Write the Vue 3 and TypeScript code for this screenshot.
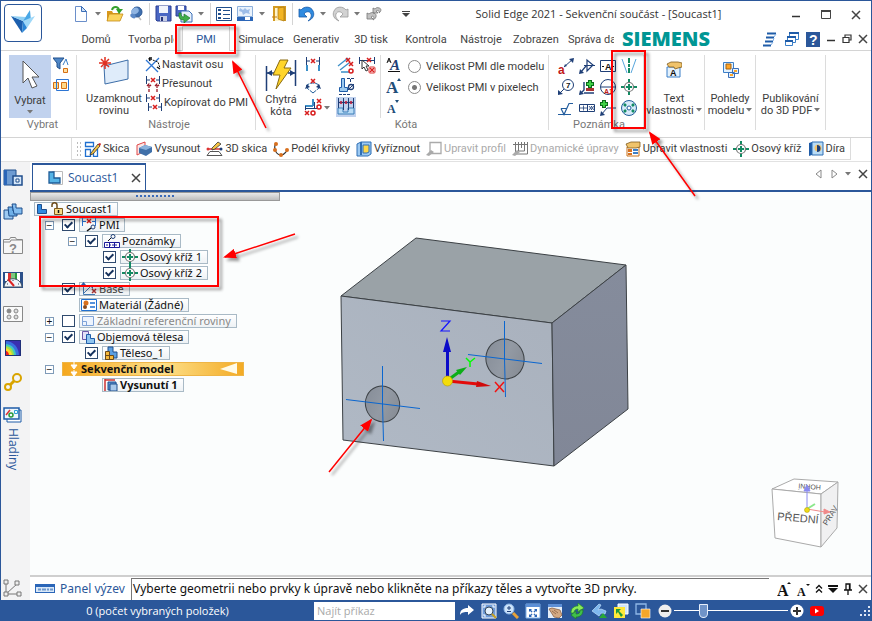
<script setup lang="ts">
import { defineComponent, h, ref } from 'vue'

type Glyph = [number, number, string]

const n = '#1f3f77'
const r = '#d81e1e'
const pencil = '<path d="M7 12l7-9 2 2-7 8-3 1z" fill="#f4c343" stroke="#333" stroke-width=".8"/><path d="M14 3l2 2 1-2-1-1z" fill="#c22"/>'
const axisCross = '<path d="M8 0v16M0 8h16" stroke="#138a62" stroke-width="2" stroke-dasharray="4 1 6 1 4"/><circle cx="8" cy="8" r="4.500" fill="#fff" stroke="#777" stroke-width="1.200"/><path d="M8 5v6M5 8h6" stroke="#138a62" stroke-width="2"/>'
const plus = (x: number, y: number) => `<path d="M${x} ${y - 4}v8M${x - 4} ${y}h8" stroke="#0a6b1c" stroke-width="4"/><path d="M${x} ${y - 3}v6M${x - 3} ${y}h6" stroke="#3fd046" stroke-width="2"/>`
const cross = (x: number, y: number, c = r) => `<path d="M${x - 2} ${y - 2}l4 4M${x + 2} ${y - 2}l-4 4" stroke="${c}" stroke-width="1.500"/>`
const dim = (y: number, x = 0) => `<path d="M${x + 1.5} ${y - 4}v8M${x + 14.5} ${y - 4}v8M${x + 1} ${y}h4M${x + 11} ${y}h4" stroke="${n}"/>${cross(x + 8, y)}`
const txt = (x: number, y: number, s: number, t: string, c = '#111', f = 'Liberation Sans') => `<text x="${x}" y="${y}" font-size="${s}" font-weight="bold" font-family="${f}" fill="${c}">${t}</text>`

const glyphs: Record<string, Glyph> = {
  logo: [26, 26, '<path d="M1 6l12 5-1 12z" fill="#1c5fae"/><path d="M1 6l12 5 3-4z" fill="#8fd0f5"/><path d="M13 11l7-11 1 11z" fill="#49a7e6"/><path d="M13 11l12-5-8 12z" fill="#9fd8f8"/><path d="M13 11l4 7-5 5z" fill="#2b86d6"/>'],
  fresh: [16, 18, '<path d="M2.500 1.500h6l5 5v10h-11z" fill="#fdfeff" stroke="#6b8fca"/><path d="M8.500 1.500v5h5z" fill="#cfe0f6" stroke="#3b6fb8"/>'],
  open: [18, 18, '<path d="M1 6h5l1 2h7v8H1z" fill="#d9981b"/><path d="M3 9h14l-3 7H1z" fill="#fbd45c" stroke="#c58a17" stroke-width=".8"/><path d="M6 5c1-4 6-4 7 0" fill="none" stroke="#33a02c" stroke-width="2"/><path d="M10 4h7l-4 5z" fill="#33a02c"/>'],
  pin: [16, 16, '<path d="M9 9l4 5" stroke="#bbb" stroke-width="1.500"/><ellipse cx="9" cy="6" rx="5" ry="5" fill="#3f6fae" stroke="#2b5796"/><ellipse cx="7" cy="5" rx="4" ry="3" fill="#8fb4e2" transform="rotate(-35 7 5)"/><ellipse cx="5" cy="10" rx="3" ry="2" fill="#5c89c7" transform="rotate(30 5 10)"/>'],
  save: [17, 17, '<path d="M1 1h15v15H2l-1-1z" fill="#4a67c3" stroke="#2b3f93"/><path d="M4 1h9v7H4z" fill="#f1f4fb"/><path d="M5 11h7v5H5z" fill="#c5cbe4"/><path d="M6 12h2v4H6z" fill="#26357a"/>'],
  saveas: [18, 18, '<path d="M1 1h10v10H1z" fill="#4a67c3" stroke="#2b3f93"/><path d="M3 1h6v4H3z" fill="#fff"/><path d="M6 6h8l3 3v8H6z" fill="#e6f0fb" stroke="#3b6fb8"/><path d="M4 8v3c0 3 2 4 5 4v3l6-5-6-4v3c-2 0-3-1-3-4z" fill="#3fae49" stroke="#1f7a2b" stroke-width=".7"/>'],
  list: [16, 16, '<path d="M.5 1.500h15v13H.5z" fill="#fff" stroke="#1f4e8c"/><path d="M2 3h3v2H2zM2 7h3v2H2zM2 11h3v2H2z" fill="#1f4e8c"/><path d="M7 4.500h7M7 8.500h7M7 12.500h7" stroke="#1f4e8c"/>'],
  monitor: [16, 16, '<path d="M.5.5h15v10H.5z" fill="#e9f2fc" stroke="#8db0db"/><path d="M3 2l3 2 2-2 2 2 3-1-1 3 1 2-4-1-3 2-1-3-3-1z" fill="#9dbde8"/><path d="M0 11h16v4H0z" fill="#2b66b8"/><path d="M8 11h5v3H8z" fill="#fff"/>'],
  door: [16, 16, '<path d="M3 15V1h11v14" fill="#fff3c9" stroke="#d39a21" stroke-width="2"/><path d="M7 2l6-1v14l-6-2z" fill="#f3b524" stroke="#a87512" stroke-width=".7"/><path d="M1 11h5" stroke="#c47f13"/>'],
  undo: [17, 16, '<path d="M1 3v8h8l-3-3c2-3 6-3 7 0 1 3-1 5-3 7 5-2 7-6 5-10-2-5-9-5-12-1z" fill="#2f8be0" stroke="#1a5ba8" stroke-width=".8"/>'],
  redo: [17, 16, '<path d="M16 3v8H8l3-3C9 5 5 5 4 8c-1 3 1 5 3 7C2 13 0 9 2 5c2-5 9-5 12-1z" fill="#d2d2d2" stroke="#999" stroke-width=".8"/>'],
  link: [16, 16, '<path d="M7 2v5h5L10 5c2-1 4 0 3 2 3-2 2-5 0-5-2-1-3 0-4 1zM1 7v6h6l-2-2c2-2 4 0 2 3 4-2 4-6 1-7-2-1-4 0-5 1z" fill="#c2c2c2" stroke="#777" stroke-width=".8"/>'],
  caret: [6, 4, '<path d="M0 0h6L3 3.500z" fill="#777"/>'],
  more: [10, 8, '<path d="M1 1.500h8" stroke="#444"/><path d="M1 3h8L5 7z" fill="#444"/>'],
  cascA: [16, 16, '<path d="M5 2.500h9M4 6.500h8M3 10.500h8M1 14.500h8" stroke="#1f5ca8" stroke-width="2"/><path d="M14 3l-2 3M12 7l-1 3M11 11l-2 3" stroke="#7fb0e8"/>'],
  cascB: [16, 16, '<path d="M5.500 1.500h9v7h-9z" fill="#fff" stroke="#3b7fc8"/><path d="M5 1h10v2H5z" fill="#1f5ca8"/><path d="M3.500 5.500h8v6h-8z" fill="#fff" stroke="#3b7fc8"/><path d="M3 5h9v2H3z" fill="#1f5ca8"/><path d="M1.500 9.500h7v5h-7z" fill="#fff" stroke="#3b7fc8"/><path d="M1 9h8v2H1z" fill="#1f5ca8"/>'],
  help: [14, 16, '<path d="M0 1h14v15H0z" fill="#2b579a"/>' + txt(3, 14, 14, '?', '#fff')],
  min: [10, 10, '<path d="M1 6.500h8" stroke="#333" stroke-width="1.500"/>'],
  restore: [10, 10, '<path d="M3 3V1h6v5H7M1 3.500h6v5H1z" fill="none" stroke="#333" stroke-width="1.200"/>'],
  close: [10, 10, '<path d="M1 1l8 8M9 1l-8 8" stroke="#444" stroke-width="1.500"/>'],
  square: [12, 12, '<path d="M1.500 1.500h9v8h-9z" fill="none" stroke="#444"/><path d="M1 2h10" stroke="#444" stroke-width="2"/>'],
  cursor: [22, 32, '<path d="M4 1v22l5-5 4 10 5-2-5-9h7z" fill="#fff" stroke="#555"/>'],
  filter: [16, 16, '<path d="M0 1h11L7 6v6l-3-2V6z" fill="#4e86c6" stroke="#1f4e8c"/><path d="M10 8l3-6 2 6" fill="none" stroke="#3b7fc8"/><path d="M10.500 11.500h4v4h-4z" fill="#ffe0a0" stroke="#d66f13"/>'],
  boxsel: [16, 16, '<path d="M.5 5.500h5v6h-5zM8.500 5.500h5v6h-5z" fill="#ffd98a" stroke="#d66f13"/><path d="M3.500 2.500h12v11h-12z" fill="none" stroke="#2d75d3"/>'],
  plane: [34, 32, '<path d="M7 10l24-6v19L8 28z" fill="#dfecfa" stroke="#3d6ea8"/><path d="M8 1v12M2 7h12M4 3l8 8M12 3l-8 8" stroke="#e13021" stroke-width="1.500"/>'],
  axisset: [16, 16, '<path d="M1 3l12 12M1 14L14 1" stroke="#2d75d3" stroke-width="1.300"/><path d="M5 2l8 3 2 6" fill="none" stroke="#111" stroke-dasharray="2 1"/><path d="M4 1h3M4 1l1 3M15 12l-3-2" stroke="#111" stroke-width="1.500"/>'],
  move: [16, 16, dim(4) + '<path d="M4 16V8M12 16V8M2 10l2-2 2 2M10 10l2-2 2 2" fill="none" stroke="#9c1c2a" stroke-width="1.300" stroke-dasharray="3 1"/>'],
  copy: [18, 18, dim(4) + dim(13, 2)],
  smart: [32, 34, `<path d="M1.500 8v25M30.500 2v26M1 15h8M23 15h8" stroke="${n}" stroke-width="1.500"/><path d="M2 15l5-3v6zM30 15l-5-3v6z" fill="${n}"/><path d="M15 2h8l-4 8h7L11 31l4-14H8z" fill="#ffd52b" stroke="#8a6a10"/>`],
  dimA: [18, 16, dim(4, 1) + `<path d="M3 8v6M15 8v6" stroke="#3b8fc8" stroke-width="2"/>`],
  dimB: [18, 16, '<path d="M2 8c4-4 10-4 14 0M9 15L3 10M9 15l6-5" fill="none" stroke="#1f5c98" stroke-dasharray="4 1"/><path d="M3 6l-2 5 5-2zM15 6l2 5-5-2z" fill="#1f3f77"/>' + cross(9, 3)],
  dimC: [18, 18, `<path d="M9 1v7M1 8h8" stroke="#3b8fc8" stroke-width="2"/><path d="M2 10.500h12M10.500 4v7M1.500 8v4" stroke="${n}"/>` + cross(15, 3) + cross(3, 15) + `<circle cx="15" cy="9" r="2" fill="none" stroke="${r}" stroke-width="1.500"/><circle cx="9" cy="15" r="2" fill="none" stroke="${r}" stroke-width="1.500"/>`],
  dimD: [18, 17, `<path d="M1 9L11 1M3 13l9-7M4 15h8" stroke="#3b8fc8" stroke-width="1.300"/>` + cross(11, 3) + cross(14, 7) + `<circle cx="14" cy="14" r="2" fill="none" stroke="${r}" stroke-width="1.500"/>`],
  dimE: [18, 18, `<path d="M4.500 1.500h3v9h3v4h-8v-4h2z" fill="#9cc9ee" stroke="#1f5ca8"/><path d="M2 17.500h12M10 1.500h7M13.500 2v4" stroke="${n}" stroke-dasharray="3 1"/><circle cx="14" cy="10" r="2.500" fill="none" stroke="${n}" stroke-width="1.300"/><path d="M11 13l6-6" stroke="${n}"/>`],
  dimF: [20, 20, `<path d="M2 11h5v4h5v-4h6v6H2z" fill="#b9dcf6" stroke="#3b7fb8"/><path d="M2.500 1v10M7.500 1v12M12.500 1v12M17.500 1v10M2 5.500h16" stroke="${n}"/><path d="M4 4l2 3M6 4L4 7M9 4l2 3M11 4L9 7M14 4l2 3M16 4l-2 3" stroke="#c02040"/>`],
  dimG: [18, 17, `<path d="M1.500 0v7M16.500 0v7M1 3.500h16" stroke="${n}"/>` + cross(11, 3) + '<path d="M4 3v9l2-2 2 4 2-1-2-4h3z" fill="#fff" stroke="#333"/><rect x="11" y="10" width="6" height="6" rx="1" fill="#fff" stroke="#d33"/>' + cross(14, 13)],
  fontA: [16, 16, '<path d="M1 6l2-5 2 5M2 4h2" stroke="#111"/><text x="4" y="13" font-size="15" font-style="italic" font-weight="bold" font-family="Liberation Serif" fill="#1f3f77">A</text><path d="M2 14.500h12" stroke="#111"/>'],
  fontUp: [16, 16, txt(0, 15, 17, 'A', '#1f4e79', 'Liberation Serif') + '<path d="M11 3h4l-2-3z" fill="#1f4e79"/>'],
  fontDn: [16, 16, txt(1, 14, 12, 'A', '#1f4e79', 'Liberation Serif') + '<path d="M9 1h4l-2 3z" fill="#1f4e79"/>'],
  noteA: [16, 16, `<path d="M6 9l9-8" stroke="${n}"/><path d="M16 0l-5 1 4 4z" fill="${n}"/><path d="M6 9l1-3 2 2z" fill="${n}"/>` + txt(0, 16, 12, 'a', '#c01818')],
  noteB: [16, 16, `<circle cx="10" cy="6" r="5.500" fill="#fff" stroke="${n}"/><path d="M6 10l-5 5" stroke="${n}"/><path d="M0 16v-5l5 4z" fill="${n}"/>` + txt(8, 9, 8, '7')],
  noteC: [16, 16, `<path d="M0 14.500h13M3 8.500l3 6 5-11h4M3 8.500h6" fill="none" stroke="#235d9e" stroke-width="1.200"/>`],
  noteD: [16, 16, `<path d="M8 2v11l6-6zM2 14l5-6M5 7.500h11" fill="none" stroke="${n}" stroke-width="1.200"/><path d="M0 16l1-5 4 4z" fill="${n}"/>`],
  noteE: [16, 16, `<path d="M1 15l4-4V3M5 14h10" fill="none" stroke="${n}" stroke-width="1.400"/><path d="M0 16l1-5 4 4z" fill="${n}"/><path d="M7 9h8v3H7z" fill="#a33"/>` + plus(11, 5)],
  noteF: [16, 10, `<path d="M.5 1.500h15v7H.5zM8.500 2v6" fill="#fff" stroke="${n}"/><path d="M1 5h7M4.500 2.500v5M10 3l3 4M13 3l-3 4M12 3l3 4M15 3l-3 4" stroke="${n}" stroke-width=".8"/>`],
  noteG: [16, 14, `<path d="M.5 1.500h15v11H.5z" fill="#fff" stroke="${n}"/>` + txt(5, 11, 9, 'A') + '<path d="M2 7.500h2M12 7.500h2" stroke="#111"/>'],
  noteH: [16, 16, `<circle cx="8" cy="8" r="7.500" fill="#fff" stroke="${n}"/><path d="M1 8h14" stroke="${n}"/>` + txt(4, 15, 7, 'A1', '#c01818')],
  noteI: [16, 16, `<path d="M1 15l6-7h9" fill="none" stroke="${n}"/><path d="M0 16l1-5 4 4z" fill="${n}"/>` + plus(4, 4)],
  centerLine: [16, 16, '<path d="M1 1l5 14M15 1l-5 14" stroke="#58a6dc"/><path d="M8 0v16" stroke="#138a62" stroke-width="2" stroke-dasharray="5 1 3 1 5"/>'],
  axisCross: [16, 16, axisCross],
  boltCircle: [16, 16, '<circle cx="8" cy="8" r="7.500" fill="#d7eafa" stroke="#1f5c98"/><circle cx="8" cy="8" r="2" fill="#fff" stroke="#1f5c98"/><path d="M3 4l2 2M13 4l-2 2M3 12l2-2M13 12l-2-2" stroke="#138a62" stroke-width="2.500"/>'],
  textProps: [16, 17, '<path d="M1 6h13v10H1z" fill="#e3f1fd" stroke="#3b7fc8"/><path d="M1 3l4-2h7l4 1v4l-4 1-3 1-1-2H3z" fill="#f0c36b" stroke="#805a1c" stroke-width=".8"/>' + txt(4, 15, 9, 'A')],
  views: [17, 17, '<path d="M1.500 1.500h10v10h-10z" fill="#e3f1fd" stroke="#3b7fc8"/><path d="M4 3h5v5H4z" fill="#ffa526" stroke="#a36213"/><path d="M10.500 7.500h6v5h-6zM6.500 11.500h6v5h-6z" fill="#e3f1fd" stroke="#3b6fb8"/><path d="M12 9h3v2h-3zM8 13h3v2H8z" fill="#ffa526"/>'],
  sketch: [17, 16, '<path d="M1.500 1.500h8v4h-8zM1.500 8.500h5v7h-5zM9.500 8.500h4v7h-4z" fill="#fff" stroke="#1f6fd0" stroke-width="1.300"/>' + pencil],
  extrude: [17, 16, '<path d="M1 4l8-3v9l-8 4z" fill="#fbe6e6" stroke="#e04848"/><path d="M3 7l6-3 7 2v5l-6 4-7-3z" fill="#3f6fa8"/><path d="M3 7l6-3 7 2-6 3z" fill="#8ab1dc"/>'],
  sketch3d: [17, 16, '<path d="M1 14.500h15l-3-4H4z" fill="none" stroke="#555"/><path d="M1 8h14" stroke="#d33" stroke-width="1.500"/><circle cx="2" cy="8" r="1.500" fill="#d33"/><circle cx="15" cy="8" r="1.500" fill="#1f3f77"/><path d="M6 7l6-6 3 2-6 5-3 1z" fill="#f4c343" stroke="#333" stroke-width=".8"/>'],
  curve: [16, 16, '<path d="M3 2c-3 5 0 12 5 12 4 0 4-3 6-4" fill="none" stroke="#333" stroke-width="1.200"/><circle cx="3" cy="3" r="2" fill="#d8701e"/><circle cx="2" cy="9" r="2" fill="#d8701e"/><circle cx="8" cy="14" r="2" fill="#d8701e"/><circle cx="14" cy="9" r="2" fill="#d8701e"/>'],
  cut: [16, 16, '<path d="M1 3l4-2h10v12l-3 2H1z" fill="#9cc9f2" stroke="#2f6fb4"/><path d="M5 1v13" stroke="#2f6fb4" stroke-width="2"/><path d="M7 4h6v7l-2 1H7z" fill="#ffd84a" stroke="#2f6fb4"/>'],
  editProfile: [16, 16, '<path d="M4 1.500h11v11H4z" fill="#fff" stroke="#aaa" stroke-width="1.300"/><path d="M0 14l5-5 3 2-5 4z" fill="#aaa"/>'],
  dynamic: [16, 16, '<path d="M3.500 1v12h12V1M6.500 1v9h6V1M9.500 1v6M1 3.500h15" fill="none" stroke="#777"/><path d="M0 14l5-5 3 2-5 4z" fill="#aaa"/>'],
  props: [16, 16, '<path d="M2 6h12v9H2z" fill="#fff" stroke="#c8721c"/><path d="M3 8h4v3H3zM3 12h4v2H3z" fill="#d8701e"/><path d="M8 9h5M8 12h5" stroke="#3b7fc8" stroke-width="2"/><path d="M1 3l5-2h9v5l-4 1H3z" fill="#f0c36b" stroke="#805a1c" stroke-width=".8"/>'],
  hole: [16, 16, '<path d="M1 2l3-1v13l-3 1z" fill="#1f5ca8"/><path d="M4 1h11v13H4z" fill="#b9dcf6" stroke="#2f6fb4"/><circle cx="10" cy="7" r="3.500" fill="#f3c36a"/><path d="M9 4a3 3 0 0 1 0 7z" fill="#1f3f77"/>'],
  part: [16, 16, '<path d="M4.500 1.500h10v13h-10z" fill="#fff" stroke="#bbb"/><path d="M1 2h5v6h6v5H1z" fill="#56b4e6" stroke="#1f5c98" stroke-width="1.300"/>'],
  partMini: [12, 12, '<path d="M1.500 1.500h4v5h5v4h-9z" fill="#2f8be0" stroke="#1f4e8c"/>'],
  lock: [14, 14, '<path d="M2 5V3c0-3 5-3 5 0v3" fill="none" stroke="#6b4a1a" stroke-width="1.500"/><path d="M4.500 6.500h8v6h-8z" fill="#f8dc8a" stroke="#805a1c"/><path d="M8.500 8v3" stroke="#111" stroke-width="1.500"/>'],
  pmi: [16, 14, `<path d="M1.500 0v8M1 3.500h4M11 3.500h3M14.500 0v8" stroke="#2d75d3"/>` + cross(8, 3) + `<circle cx="12" cy="9" r="2" fill="none" stroke="${n}"/><path d="M10 10l-4 3" stroke="#111" stroke-width="1.500"/>`],
  notes: [16, 14, `<circle cx="9" cy="2.500" r="2" fill="none" stroke="${n}"/><path d="M7 4L4 7" stroke="#111"/><path d="M.5 8.500h15v5H.5zM5.500 8v5M10.500 8v5" fill="#fff" stroke="#1a1a9a"/><path d="M2 11h12" stroke="#1a1a9a" stroke-dasharray="2 1"/>`],
  base: [16, 14, '<path d="M2.500 1v11.500H14M2 12l8-8" fill="none" stroke="#4478b0"/><path d="M0 3l2.500-3L5 3zM8 3h4v4z" fill="#2d5fa8"/>' + cross(13, 9, '#a33')],
  material: [16, 12, '<path d="M.5.5h15v11H.5z" fill="#fff" stroke="#1f6fd0"/><circle cx="5" cy="4" r="2.500" fill="#d8701e"/><circle cx="4" cy="8" r="2" fill="#8a4a1e"/><path d="M9 4h5M9 8h5" stroke="#1f6fd0" stroke-width="1.500"/>'],
  refPlane: [14, 12, '<path d="M1.500 1.500h11v9h-11z" fill="#eef4fd" stroke="#7fa3d8"/><path d="M1 6.500h4.500v4" fill="none" stroke="#7fa3d8"/>'],
  bodies: [14, 14, '<path d="M1.500 1.500h6v8h-6z" fill="#e3e1f7" stroke="#6c5aa8"/><path d="M5.500 4.500h4v4h4v5h-8z" fill="#8fc4ef" stroke="#1f5ca8"/>'],
  body: [14, 14, '<path d="M4 1h5v5h4v6H4z" fill="#5c9fe0" stroke="#1f4e8c"/><path d="M1.500 5.500h4v8h-4zM1.500 9.500h8v4h-8z" fill="#f6b93b" stroke="#6b4a1a"/>'],
  extrMini: [14, 12, '<path d="M1 0v12M1 1h10" stroke="#c33" stroke-width="1.500"/><path d="M4 3h8v8H4z" fill="#5c8fd0" stroke="#1f4e8c"/><path d="M6 5h7v7H6z" fill="#a9c8ea" stroke="#1f4e8c"/>'],
  railA: [20, 18, '<path d="M1 1h12v15H1z" fill="#6d9bd2" stroke="#1f4e8c"/><path d="M1 1h3v15H1z" fill="#2b66b8"/><path d="M10 7h9v9h-9z" fill="#d5e6f8" stroke="#1f4e8c" stroke-width="1.500"/><path d="M13 10h3v3h-3z" fill="#fff" stroke="#1f4e8c"/>'],
  railB: [20, 18, '<path d="M1 7h5v4h4v5H1z" fill="#9cc9f2" stroke="#1f4e8c"/><path d="M5 4h5v4h4v5H6z" fill="#6fb0e8" stroke="#1f4e8c"/><path d="M9 1h4v4h6v6h-8z" fill="#84bdf0" stroke="#1f4e8c"/>'],
  railC: [20, 18, '<path d="M.5 2.500h6l1-2h5l1 2h6v14H.5z" fill="#f6f6f6" stroke="#888"/><path d="M1 5h6l1-2h11" stroke="#888"/>' + txt(6, 16, 13, '?', '#888')],
  railD: [20, 18, '<path d="M0 1h20v16H0z" fill="#2b4f8a"/><path d="M2 2h3v8H2z" fill="#fff"/><path d="M5 2h3v8H5z" fill="#d33"/><path d="M8 2h4v8H8z" fill="#7fc77f"/><path d="M12 2h2v8h-2z" fill="#2a9a3a"/><path d="M14 2h3v8h-3z" fill="#fff"/><path d="M1 16c1-11 17-11 18 0z" fill="#eef3fa" stroke="#456"/><path d="M5 8l6 7" stroke="#d22" stroke-width="2"/><path d="M4 13h1M10 9v1M16 13h-1" stroke="#345"/>'],
  railE: [20, 18, '<path d="M.5 1.500h19v15H.5z" fill="#fafafa" stroke="#888"/><circle cx="6" cy="6" r="2" fill="#888" stroke="#888"/><circle cx="13" cy="6" r="2" fill="#ddd" stroke="#888"/><circle cx="6" cy="12" r="2" fill="#ddd" stroke="#888"/><circle cx="13" cy="12" r="2" fill="#ddd" stroke="#888"/>'],
  railF: [18, 18, '<path d="M1 1h16v16H1z" fill="#3a2fb0"/><path d="M1 2c9 0 14 7 14 15H1z" fill="#3a6fe0"/><path d="M1 5c7 0 11 5 11 12H1z" fill="#3fc8c0"/><path d="M1 7c5 0 9 4 9 10H1z" fill="#9fe04a"/><path d="M1 9c4 0 7 4 7 8H1z" fill="#ffd92b"/><path d="M1 12c3 0 4 2 4 5H1z" fill="#e22"/><path d="M1.500 1.500h15v15h-15z" stroke="#1f2f77"/>'],
  railG: [20, 20, '<path d="M6 14l8-8" stroke="#d9a400" stroke-width="3"/><circle cx="14" cy="6" r="4" fill="#f4f5f7" stroke="#d9a400" stroke-width="2"/><circle cx="5" cy="15" r="3" fill="#f4f5f7" stroke="#d9a400" stroke-width="2"/>'],
  railH: [20, 18, '<path d="M4 4h14v12H4z" fill="#fff" stroke="#1f5ca8"/><path d="M1 2h15v11H1z" fill="#eef6fd" stroke="#1f5ca8" stroke-width="1.500"/><path d="M3 9l4-5" stroke="#d33" stroke-width="1.500"/><circle cx="8" cy="9" r="2" fill="none" stroke="#2a9a3a" stroke-width="1.500"/><path d="M11.500 4.500h3v3h-3z" fill="none" stroke="#2d9fd3"/>'],
  railI: [20, 18, '<path d="M3 4v10M3 15h14M3 15L15 4" stroke="#777" fill="none"/><path d="M1 1h4v4H1zM12 2h4v4h-4zM1 13h4v4H1zM14 13h4v4h-4z" fill="#eee" stroke="#777"/>'],
  panel: [20, 9, '<path d="M0 0h20v9H0z" fill="#2b66b8"/><path d="M1 3h18v5H1z" fill="#d9e8f8"/><path d="M3 5.500h3M7 5.500h4M12 5.500h2M15 5.500h3" stroke="#6f98cc" stroke-width="2"/>'],
  bigA: [14, 16, txt(0, 15, 16, 'A', '#111', 'Liberation Serif') + '<path d="M10 3h4l-2-2z" fill="#111"/>'],
  smallA: [14, 16, txt(1, 15, 12, 'A', '#111', 'Liberation Serif') + '<path d="M10 3h4l-2 2z" fill="#111"/>'],
  chevUp: [8, 10, '<path d="M1 4.500l3-3 3 3M1 8.500l3-3 3 3" fill="none" stroke="#111" stroke-width="1.300"/>'],
  menuDn: [10, 10, '<path d="M0 2h10" stroke="#111" stroke-width="2"/><path d="M0 4h10L5 9z" fill="#111"/>'],
  tack: [10, 12, '<path d="M3 1h4v6H3zM1 7h8M5 7v5M6.500 1v6" fill="none" stroke="#111" stroke-width="1.300"/>'],
  go: [16, 14, '<path d="M1 11c0-5 3-7 8-7V1l6 5-6 5V8c-4 0-6 0-8 3z" fill="#fff"/>'],
  zoomArea: [16, 16, '<path d="M1 1h14v14H1z" fill="#6f9bd8" stroke="#fff"/><circle cx="8" cy="8" r="4" fill="#e6f2fd" stroke="#345"/><path d="M3 5V3h2M11 3h2v2M3 11v2h2" stroke="#fff"/><path d="M11 11l4 4" stroke="#c8a020" stroke-width="2"/>'],
  zoom: [16, 16, '<circle cx="6" cy="6" r="5" fill="#cfe5fb" stroke="#8fb8e8"/><path d="M10 10l5 5" stroke="#e8a23a" stroke-width="3"/><path d="M4 5h4M6 3v4M4 8.500h4" stroke="#1f3f77"/>'],
  fit: [16, 16, '<path d="M1 1h14v14H1z" fill="#fff" stroke="#7fb0e8"/><path d="M1 1h14v3H1z" fill="#5d8fd6"/><path d="M5 7l6 6M11 7l-6 6" stroke="#2b66b8" stroke-width="1.300"/><path d="M4 6h3L4 9zM12 6H9l3 3zM4 14h3l-3-3zM12 14H9l3-3z" fill="#2b66b8"/><circle cx="8" cy="10" r="1.500" fill="#fff"/>'],
  pan: [16, 16, '<path d="M1 1h14v14H1z" fill="#e4edf8"/><path d="M1 1h14v3H1z" fill="#5d8fd6"/><path d="M2 6l3-1 8 2 2 5-3 3-5-1z" fill="#d3a983" stroke="#80543a" stroke-width=".7"/><path d="M5 8l4 3M7 7l4 3" stroke="#80543a" stroke-width=".7"/>'],
  rotate: [16, 16, '<path d="M2 10c0-5 3-7 7-7V0l6 5-6 4V6c-3 0-4 2-4 4z" fill="#8bea5a" stroke="#1f8a2b" stroke-width=".7"/><path d="M14 7c0 5-3 7-7 7v2l-5-4 5-4v3c3 0 4-1 4-4z" fill="#3fc04a" stroke="#1f7a2b" stroke-width=".7"/>'],
  spin: [16, 16, '<path d="M8 1l2 1-3 5 3-1 5 2-1 3-4-1-2 3-7-5z" fill="#7fb8ef" stroke="#bcdcfa" stroke-width=".7"/><path d="M8 15l4-5 4 5z" fill="#28a838"/>'],
  shade: [16, 16, '<path d="M5 1h10v10H5z" fill="#cfe5fb" stroke="#fff"/><path d="M1 4h11v11H1z" fill="#ffe83a"/><path d="M3 6h5L6 8l4 4-2 2-3-5-2 2z" fill="#1f9a3a"/>'],
  layers: [16, 16, '<path d="M1 1h10v10H1z" fill="none" stroke="#8fb8e8" stroke-width="1.300"/><path d="M6 6h9v9H6z" fill="#f6a72b" stroke="#fff" stroke-width=".6"/>'],
  zminus: [14, 14, '<circle cx="7" cy="7" r="6.500" fill="#eee"/><path d="M3 7h8" stroke="#333" stroke-width="2"/>'],
  zplus: [14, 14, '<circle cx="7" cy="7" r="6.500" fill="#fff"/><path d="M3 7h8M7 3v8" stroke="#333" stroke-width="2"/>'],
  tube: [14, 10, '<rect width="14" height="10" rx="3" fill="#f00"/><path d="M5 2.500v5l4-2.500z" fill="#fff"/>'],
  grip: [12, 12, '<path d="M9 1h2v2H9zM9 5h2v2H9zM9 9h2v2H9zM5 5h2v2H5zM5 9h2v2H5zM1 9h2v2H1z" fill="#dfe8f5"/>'],
  prev: [8, 10, '<path d="M6 1v8L1 5z" fill="#fff" stroke="#888"/>'],
  next: [8, 10, '<path d="M2 1v8l5-4z" fill="#fff" stroke="#888"/>'],
}

const Icon = defineComponent({
  props: { name: { type: String, required: true } },
  setup: (p) => () => {
    const [w, ht, body] = glyphs[p.name]
    return h('svg', { width: w, height: ht, viewBox: `0 0 ${w} ${ht}`, fill: 'none', 'aria-hidden': 'true', innerHTML: body })
  },
})

const quick = ['fresh', 'caret', 'open', 'pin', '|', 'save', 'saveas', 'caret', '|', 'list', 'monitor', 'caret', 'door', '|', 'undo', 'caret', 'redo', 'caret', 'link']
const tabs = ['Domů', 'Tvorba ploch', 'PMI', 'Simulace', 'Generativní', '3D tisk', 'Kontrola', 'Nástroje', 'Zobrazení', 'Správa dat']
const activeTab = ref('PMI')
const pmiSize = ref('px')
const noteIcons = ['noteA', 'noteD', 'noteG', 'centerLine', 'noteB', 'noteE', 'noteH', 'axisCross', 'noteC', 'noteF', 'noteI', 'boltCircle']
const commands = [
  { icon: 'sketch', label: 'Skica' },
  { icon: 'extrude', label: 'Vysunout' },
  { icon: 'sketch3d', label: '3D skica' },
  { icon: 'curve', label: 'Podél křivky' },
  { icon: 'cut', label: 'Vyříznout' },
  { icon: 'editProfile', label: 'Upravit profil', off: true },
  { icon: 'dynamic', label: 'Dynamické úpravy', off: true },
  { icon: 'props', label: 'Upravit vlastnosti' },
  { icon: 'axisCross', label: 'Osový kříž' },
  { icon: 'hole', label: 'Díra' },
]
const rail = ['railA', 'railB', 'railC', 'railD', 'railE', 'railF', 'railG']

interface Node { label: string; icons: string[]; level: number; exp?: string; check?: boolean; kind?: string }
const tree = ref<Node[]>([
  { label: 'Soucast1', icons: ['partMini', 'lock'], level: 0 },
  { label: 'PMI', icons: ['pmi'], level: 1, exp: '−', check: true },
  { label: 'Poznámky', icons: ['notes'], level: 2, exp: '−', check: true },
  { label: 'Osový kříž 1', icons: ['axisCross'], level: 3, check: true },
  { label: 'Osový kříž 2', icons: ['axisCross'], level: 3, check: true },
  { label: 'Base', icons: ['base'], level: 1, check: true, kind: 'soft' },
  { label: 'Materiál (Žádné)', icons: ['material'], level: 1 },
  { label: 'Základní referenční roviny', icons: ['refPlane'], level: 1, exp: '+', check: false, kind: 'dim' },
  { label: 'Objemová tělesa', icons: ['bodies'], level: 1, exp: '−', check: true },
  { label: 'Těleso_1', icons: ['body'], level: 2, check: true },
  { label: 'Sekvenční model', icons: [], level: 1, exp: '−', kind: 'model' },
  { label: 'Vysunutí 1', icons: ['extrMini'], level: 2, kind: 'bold' },
])
const statusIcons = ['go', 'zoomArea', 'zoom', 'fit', 'pan', 'rotate', 'spin', 'shade', 'layers']
const find = ref('')
const zoomLevel = ref(24)
</script>

<template>
  <div class="window">
    <header class="head">
      <button class="logo" aria-label="Solid Edge"><Icon name="logo" /></button>
      <div class="head-rows">
        <div class="title-row">
          <div class="quick">
            <template v-for="(q, i) in quick" :key="i">
              <span v-if="q === '|'" class="vline"></span>
              <button v-else :class="q === 'caret' ? 'q-caret' : 'q-btn'"><Icon :name="q" /></button>
            </template>
          </div>
          <button class="q-more"><Icon name="more" /></button>
          <div class="title">Solid Edge 2021 - Sekvenční součást - [Soucast1]</div>
          <div class="win-controls">
            <button><Icon name="min" /></button>
            <button><Icon name="square" /></button>
            <button><Icon name="close" /></button>
          </div>
        </div>
        <div class="tab-row">
          <nav class="tabs">
            <button v-for="t in tabs" :key="t" class="tab" :class="{ active: t === activeTab }" @click="activeTab = t">{{ t }}</button>
          </nav>
          <div class="brand">SIEMENS</div>
          <div class="doc-controls">
            <button><Icon name="cascA" /></button>
            <button><Icon name="cascB" /></button>
            <button><Icon name="help" /></button>
            <button><Icon name="min" /></button>
            <button><Icon name="restore" /></button>
            <button><Icon name="close" /></button>
          </div>
        </div>
      </div>
    </header>

    <section class="ribbon">
      <div class="group g-select">
        <div class="body">
          <button class="big chosen"><Icon name="cursor" /><span>Vybrat</span><Icon name="caret" /></button>
          <div class="stack">
            <button><Icon name="filter" /></button>
            <button><Icon name="boxsel" /></button>
          </div>
        </div>
        <div class="caption">Vybrat</div>
      </div>
      <div class="group g-tools">
        <div class="body">
          <button class="big"><Icon name="plane" /><span>Uzamknout<br />rovinu</span></button>
          <div class="stack tight">
            <button class="line"><Icon name="axisset" />Nastavit osu</button>
            <button class="line"><Icon name="move" />Přesunout</button>
            <button class="line"><Icon name="copy" />Kopírovat do PMI</button>
          </div>
        </div>
        <div class="caption">Nástroje</div>
      </div>
      <div class="group g-dim">
        <div class="body">
          <button class="big"><Icon name="smart" /><span>Chytrá<br />kóta</span></button>
          <div class="stack dims">
            <button><Icon name="dimA" /></button>
            <button><Icon name="dimB" /></button>
            <button><Icon name="dimC" /></button>
          </div>
          <div class="stack dims caret-col"><button><Icon name="caret" /></button></div>
          <div class="stack dims">
            <button><Icon name="dimD" /></button>
            <button><Icon name="dimE" /></button>
            <button class="on"><Icon name="dimF" /></button>
          </div>
          <div class="stack dims last"><button><Icon name="dimG" /></button></div>
          <span class="inner-line"></span>
          <div class="stack fonts">
            <button><Icon name="fontA" /></button>
            <button><Icon name="fontUp" /></button>
            <button><Icon name="fontDn" /></button>
          </div>
          <div class="stack radios">
            <label><input v-model="pmiSize" type="radio" name="size" value="model" />Velikost PMI dle modelu</label>
            <label><input v-model="pmiSize" type="radio" name="size" value="px" />Velikost PMI v pixelech</label>
          </div>
        </div>
        <div class="caption">Kóta</div>
      </div>
      <div class="group g-note">
        <div class="body note-grid">
          <button v-for="i in noteIcons" :key="i"><Icon :name="i" /></button>
        </div>
        <div class="caption">Poznámka</div>
      </div>
      <div class="group g-text">
        <button class="big"><Icon name="textProps" /><span>Text<br />vlastnosti<Icon class="after" name="caret" /></span></button>
      </div>
      <div class="group g-views">
        <button class="big"><Icon name="views" /><span>Pohledy<br />modelu<Icon class="after" name="caret" /></span></button>
      </div>
      <div class="group g-pdf">
        <button class="big"><span>Publikování<br />do 3D PDF<Icon class="after" name="caret" /></span></button>
      </div>
    </section>

    <section class="command-row">
      <div class="commands">
        <span class="handle"></span>
        <button v-for="c in commands" :key="c.label" :disabled="c.off"><Icon :name="c.icon" />{{ c.label }}</button>
      </div>
    </section>

    <div class="work">
      <aside class="rail">
        <button v-for="i in rail" :key="i"><Icon :name="i" /></button>
        <button class="layers"><Icon name="railH" /><span>Hladiny</span></button>
        <button class="rail-end"><Icon name="railI" /></button>
      </aside>
      <div class="pane">
        <div class="doc-tabs">
          <div class="doc-tab"><Icon name="part" /><span>Soucast1</span><button aria-label="Zavřít"><Icon name="close" /></button></div>
          <div class="doc-nav">
            <button><Icon name="prev" /></button>
            <button><Icon name="next" /></button>
            <button><Icon name="caret" /></button>
            <button><Icon name="close" /></button>
          </div>
        </div>
        <main class="canvas">
          <div class="path-finder">
            <div class="splitter"></div>
            <ul class="tree">
              <li v-for="node in tree" :key="node.label" :class="['lv' + node.level, node.kind]">
                <template v-if="node.level > 0">
                  <span class="slot"><button v-if="node.exp" class="exp">{{ node.exp }}</button></span>
                  <span v-if="node.kind !== 'model'" class="slot">
                    <input v-if="node.check !== undefined" v-model="node.check" type="checkbox" :aria-label="node.label" />
                  </span>
                </template>
                <span class="node">
                  <svg v-if="node.kind === 'model'" width="16" height="14" viewBox="0 0 16 14"><path d="M10 0v4M10 8v4M7 3h6l-3 4zM7 10h6l-3 4z" fill="#fff" stroke="#fff" /></svg>
                  <Icon v-for="i in node.icons" :key="i" :name="i" />
                  <span>{{ node.label }}</span>
                  <svg v-if="node.kind === 'model'" class="marker" width="18" height="12" viewBox="0 0 18 12"><path d="M0 6l17-6v11z" fill="#fffbe8" /></svg>
                </span>
              </li>
            </ul>
          </div>
          <svg class="scene" viewBox="280 192 591 383" preserveAspectRatio="xMinYMin meet">
            <defs>
              <linearGradient id="front" x1="0" y1="1" x2="1" y2="0"><stop offset="0" stop-color="#b0b9c5" /><stop offset="1" stop-color="#a9b1bd" /></linearGradient>
              <linearGradient id="side" x1="0" y1="0" x2="0" y2="1"><stop offset="0" stop-color="#858c9c" /><stop offset="1" stop-color="#818797" /></linearGradient>
              <linearGradient id="bore" x1="0" y1="0" x2="1" y2="1"><stop offset="0" stop-color="#848b96" /><stop offset=".5" stop-color="#939aa4" /><stop offset="1" stop-color="#838890" /></linearGradient>
            </defs>
            <g stroke="#3c4145" stroke-linejoin="round">
              <path d="M341 296L416 238L626 265L552 323z" fill="#9aa2a7" />
              <path d="M341 296L552 323L554 466L343 440z" fill="url(#front)" />
              <path d="M552 323L626 265L628 409L554 466z" fill="url(#side)" />
              <ellipse cx="382.500" cy="404" rx="17" ry="18" fill="url(#bore)" transform="rotate(-20 382.500 404)" />
              <ellipse cx="505" cy="359" rx="19" ry="20" fill="url(#bore)" transform="rotate(-20 505 359)" />
            </g>
            <path d="M382.500 366v38l1 37M346 399.500l74 9M504.500 321v38l1 38M468 354.500l74 9" fill="none" stroke="#0a66cf" />
            <path d="M447.500 380v-30" stroke="#0b0bc8" stroke-width="3" /><path d="M447 337l-4 15h8z" fill="#0b0bc8" />
            <path d="M448 380l11-8" stroke="#0cae17" stroke-width="3" /><path d="M467 367l-11 3 4 5z" fill="#0cae17" />
            <path d="M448 381l30 3" stroke="#e30b0b" stroke-width="3" /><path d="M491 386l-14-5-1 6z" fill="#d00a0a" />
            <circle cx="447.500" cy="381" r="5" fill="#f3dc0a" stroke="#b39a00" stroke-width=".6" />
            <path d="M441 321h9l-9 10h9" fill="none" stroke="#1515ff" stroke-width="1.200" />
            <path d="M466 358l4 4v5M475 358l-5 4" fill="none" stroke="#0f0" stroke-width="1.500" />
            <path d="M495 382l9 10M504 382l-9 10" stroke="#f21111" stroke-width="1.500" />
            <g stroke="#aaa" fill="#fff" stroke-linejoin="round">
              <path d="M772 489l22-10 44 3-17 12z" />
              <path d="M772 489l49 5v53l-46-9z" />
              <path d="M821 494l17-12-1 46-16 19z" fill="#f0f0f1" />
            </g>
            <g class="cube-text" fill="#555">
              <text x="777" y="520" font-size="11" transform="rotate(5 777 520)">PŘEDNÍ</text>
              <text x="827" y="526" font-size="8" transform="rotate(-58 827 526)">PRAV</text>
              <text x="821" y="485" font-size="7" transform="rotate(184 821 485)">HORNÍ</text>
            </g>
            <path d="M807 509v-20M804 491l3-6 3 6z" stroke="#8a8af0" fill="#8a8af0" />
            <path d="M807 509l8-5" stroke="#8ce88c" stroke-width="2" />
            <path d="M807 509l18 3M824 509l6 3-6 2z" stroke="#f08a8a" fill="#f08a8a" />
            <circle cx="807" cy="510" r="2.500" fill="#f0dc18" stroke="#a90" stroke-width=".5" />
          </svg>
        </main>
        <div class="prompt">
          <div class="prompt-name"><Icon name="panel" /><span>Panel výzev</span></div>
          <div class="prompt-text">Vyberte geometrii nebo prvky k úpravě nebo klikněte na příkazy těles a vytvořte 3D prvky.</div>
          <div class="prompt-tools">
            <button><Icon name="bigA" /></button>
            <button><Icon name="smallA" /></button>
            <button><Icon name="chevUp" /></button>
            <button><Icon name="menuDn" /></button>
            <button><Icon name="tack" /></button>
            <button><Icon name="close" /></button>
          </div>
        </div>
      </div>
    </div>

    <footer class="status">
      <div class="count">0 (počet vybraných položek)</div>
      <input v-model="find" class="find" type="text" placeholder="Najít příkaz" aria-label="Najít příkaz" />
      <div class="status-icons">
        <button v-for="i in statusIcons" :key="i"><Icon :name="i" /></button>
      </div>
      <div class="zoomer">
        <button><Icon name="zminus" /></button>
        <input v-model="zoomLevel" type="range" min="0" max="100" aria-label="Zoom" />
        <button><Icon name="zplus" /></button>
        <button class="tube"><Icon name="tube" /></button>
      </div>
      <Icon class="grip" name="grip" />
    </footer>

    <svg class="marks" viewBox="0 0 872 621" preserveAspectRatio="xMinYMin meet" aria-hidden="true">
      <defs>
        <filter id="drop" x="-20%" y="-20%" width="150%" height="150%"><feDropShadow dx="3" dy="3" stdDeviation="1.500" flood-color="#000" flood-opacity=".4" /></filter>
        <marker id="tip" markerUnits="userSpaceOnUse" markerWidth="14" markerHeight="10" refX="11" refY="5" orient="auto"><path d="M0 0l13 5-13 5z" fill="#f00" /></marker>
      </defs>
      <g filter="url(#drop)" fill="none" stroke="#f00">
        <path d="M176 25h59v28h-59zM40 217h178v69H40zM612 51h33v77h-33z" stroke-width="2" />
        <path d="M266 128L233 62" stroke-width="1.500" marker-end="url(#tip)" />
        <path d="M295 234L225 257" stroke-width="1.500" marker-end="url(#tip)" />
        <path d="M695 196L650 133" stroke-width="1.500" marker-end="url(#tip)" />
        <path d="M329 472L371 420" stroke-width="1.500" marker-end="url(#tip)" />
      </g>
    </svg>
  </div>
</template>

<style>
body {
  background: #fff;
}
</style>

<style scoped>
.window {
  position: relative;
  display: flex;
  flex-direction: column;
  box-sizing: border-box;
  min-height: 100vh;
  border: 1px solid #2b579a;
  border-bottom: 0;
  font-family: 'Roboto', 'Liberation Sans', sans-serif;
  font-size: 11px;
  color: #3c3c3c;
  overflow: hidden;
}
button {
  display: inline-flex;
  align-items: center;
  justify-content: center;
  padding: 0;
  border: 0;
  background: none;
  font: inherit;
  color: inherit;
  white-space: nowrap;
}
svg { flex: none; }
.head { display: flex; height: 49px; border-bottom: 1px solid #d4d4d4; }
.logo { width: 38px; height: 38px; margin: 3px; box-sizing: border-box; border: 1px solid #2b579a; border-radius: 4px; background: #fff; }
.head-rows { flex: 1; min-width: 0; }
.title-row { display: flex; align-items: center; height: 25px; }
.quick { display: flex; align-items: center; gap: 5px; padding-left: 28px; }
.q-btn { width: 16px; height: 18px; }
.q-caret { width: 8px; height: 18px; }
.vline { width: 1px; height: 22px; background: #d4d4d4; }
.q-more { width: 20px; margin-left: 14px; }
.title { flex: 1; padding-right: 10px; text-align: center; font-family: 'Open Sans', sans-serif; font-size: 11px; color: #333; }
.win-controls { display: flex; gap: 19px; padding: 2px 10px 0 0; }
.tab-row { display: flex; align-items: stretch; height: 25px; }
.tabs { display: flex; gap: 7px; padding-left: 27px; }
.tab { display: block; width: 48px; box-sizing: border-box; border: 1px solid transparent; border-bottom: 0; overflow: hidden; font-size: 11px; color: #444; }
.tab.active { border-color: #d4d4d4; background: #fff; color: #2b579a; }
.brand { padding-left: 7px; font: 800 20px/26px 'Open Sans', sans-serif; color: #009694; }
.doc-controls { display: flex; align-items: center; gap: 6px; margin-left: auto; padding-right: 3px; }
.ribbon { display: flex; height: 86px; border-bottom: 1px solid #d4d4d4; font-size: 11px; line-height: 12px; }
.group { box-sizing: border-box; height: 75px; margin-top: 4px; border-right: 1px solid #dcdcdc; }
.body { display: flex; height: 63px; }
.caption { text-align: center; color: #777; line-height: 13px; }
.g-select { width: 76px; padding-left: 8px; }
.g-tools { width: 179px; padding-left: 6px; }
.g-dim { width: 293px; padding-left: 8px; }
.g-note { width: 95px; padding-left: 6px; }
.g-text { width: 61px; }
.g-views { width: 51px; }
.g-pdf { width: 70px; }
.g-text .big, .g-views .big, .g-pdf .big { width: 100%; height: 62px; justify-content: flex-end; gap: 15px; }
.big { flex-direction: column; gap: 4px; }
.big span { text-align: center; }
.after { margin: 0 0 2px 2px; }
.chosen { width: 42px; height: 63px; gap: 3px; background: #c1d2ee; }
.g-tools .big { width: 62px; justify-content: flex-start; gap: 5px; padding-top: 1px; }
.g-dim .big { width: 34px; justify-content: flex-start; gap: 2px; padding-top: 3px; }
.stack { display: flex; flex-direction: column; gap: 4px; padding: 2px 0 0 2px; }
.stack button { height: 16px; }
.tight { gap: 1px; padding: 1px 0 0; }
.tight .line { justify-content: flex-start; gap: 1px; height: 18px; }
.dims { gap: 1px; padding: 0 0 0 5px; }
.dims button { width: 20px; height: 20px; }
.dims .on { background: #c1d2ee; }
.caret-col { justify-content: flex-end; padding: 0; }
.caret-col button { width: 8px; }
.last { padding-left: 1px; }
.inner-line { width: 1px; height: 63px; margin: 0 3px; background: #dcdcdc; }
.fonts { gap: 5px; padding: 2px 0 0 2px; }
.radios { gap: 8px; padding: 5px 0 0 6px; }
.radios label { display: flex; align-items: center; gap: 5px; height: 13px; white-space: nowrap; }
.radios input { width: 13px; height: 13px; margin: 0; appearance: none; box-sizing: border-box; border: 1px solid #8a8a8a; border-radius: 50%; background: #fff; }
.radios input:checked { background: radial-gradient(circle, #777 0 2px, #fff 3px); }
.note-grid { display: grid; grid-template-columns: repeat(4, 21px); grid-auto-rows: 21px; }
.command-row { height: 23px; padding-left: 70px; border-bottom: 1px solid #e2e2e2; }
.commands { display: inline-flex; align-items: center; gap: 6px; height: 21px; padding: 0 5px 0 4px; border: 1px solid #dcdcdc; border-top: 0; }
.commands button { gap: 2px; }
.commands button:disabled { color: #aaa; }
.handle { width: 5px; height: 16px; margin-right: -3px; background: radial-gradient(circle, #bbb 1px, transparent 1px) 0 0 / 3px 4px; }
.work { display: flex; flex: 1; }
.rail { display: flex; flex-direction: column; align-items: center; gap: 14px; width: 29px; padding: 6px 5px 2px 0; box-sizing: border-box; background: #f3f3f4; }
.rail button { width: 22px; height: 20px; }
.rail .layers { flex-direction: column; gap: 4px; height: 64px; }
.layers span { writing-mode: vertical-rl; font: 12px 'Open Sans', sans-serif; color: #2b579a; }
.rail .rail-end { margin-top: auto; }
.pane { display: flex; flex: 1; flex-direction: column; min-width: 0; }
.doc-tabs { display: flex; justify-content: space-between; height: 30px; box-sizing: border-box; padding: 1px 3px 0 2px; border-bottom: 2px solid #2b579a; }
.doc-tab { display: flex; align-items: center; gap: 4px; width: 114px; box-sizing: border-box; padding: 0 4px 0 15px; border: 1px solid #2b579a; border-top-width: 2px; border-bottom: 0; font: 12px 'Open Sans', sans-serif; color: #2b579a; }
.doc-tab button { margin-left: auto; }
.doc-nav { display: flex; align-items: center; gap: 7px; height: 22px; }
.canvas { display: flex; flex: 1; background: #fbfdfd; }
.path-finder { width: 250px; }
.splitter { height: 9px; box-sizing: border-box; border: 1px solid #999; background: linear-gradient(#e8e8e8, #bdbdbd); }
.splitter::after { content: ''; display: block; width: 39px; height: 2px; margin: 2px auto; background: repeating-linear-gradient(90deg, #3a6ab8 0 2px, transparent 2px 4px); }
.tree { margin: 0; padding: 0; list-style: none; font: 11px/14px 'Noto Sans', sans-serif; color: #111; }
.tree li { display: flex; align-items: center; height: 16px; }
.lv0 { padding-left: 4px; }
.lv1 { padding-left: 15px; }
.lv2 { padding-left: 38px; }
.lv3 { padding-left: 56px; }
.slot { display: flex; width: 17px; }
.exp { width: 9px; height: 9px; box-sizing: border-box; border: 1px solid #7f9bb8; background: #fff; font: 10px/7px 'Liberation Sans', sans-serif; color: #111; }
.tree input { display: flex; justify-content: center; width: 13px; height: 12px; margin: 0; appearance: none; box-sizing: border-box; border: 1px solid #2f4a6e; background: #fff; }
.tree input:checked::after { content: ''; width: 3px; height: 6px; border: solid #16325c; border-width: 0 2px 2px 0; transform: rotate(45deg); }
.node { display: flex; align-items: center; gap: 2px; height: 14px; box-sizing: border-box; padding: 0 5px 0 1px; border: 1px solid #a9bac6; background: linear-gradient(#fff, #eef2f5); white-space: nowrap; }
.dim .node { color: #888; }
.soft .node { color: #444; }
.bold .node, .model .node { font-weight: 700; }
.model .node { width: 182px; gap: 1px; border-color: #eeb546; background: linear-gradient(90deg, #f5a81f, #fde08a 55%, #f3ab25); }
.marker { margin-left: auto; }
.scene { flex: 1; min-width: 0; }
.cube-text { font-family: 'Liberation Sans', sans-serif; }
.prompt { display: flex; align-items: stretch; height: 25px; box-sizing: border-box; border-top: 2px solid #cfcfcf; background: #fff; font: 12px/19px 'Noto Sans', sans-serif; }
.prompt-name { display: flex; align-items: center; gap: 5px; width: 101px; box-sizing: border-box; padding-left: 5px; color: #2b579a; }
.prompt-text { flex: 1; margin-top: 1px; border-top: 1px solid #777; border-left: 1px solid #777; padding-left: 1px; color: #111; white-space: nowrap; overflow: hidden; }
.prompt-tools { display: flex; align-items: center; gap: 5px; padding: 0 3px 0 8px; }
.status { display: flex; align-items: center; height: 21px; background: #2b579a; color: #fff; font: 11px 'Open Sans', sans-serif; }
.count { width: 313px; text-align: center; }
.find { width: 141px; height: 18px; box-sizing: border-box; border: 0; padding: 0 3px; font: 11px 'Open Sans', sans-serif; }
.find::placeholder { color: #aaa; }
.status-icons { display: flex; padding-left: 1px; }
.status-icons button { width: 22px; }
.zoomer { display: flex; align-items: center; gap: 2px; padding-left: 4px; }
.zoomer input { width: 114px; height: 16px; margin: 0; appearance: none; background: linear-gradient(#fff, #fff) center / 100% 1px no-repeat; }
.zoomer input::-webkit-slider-thumb { appearance: none; width: 9px; height: 14px; border: 1px solid #e6eefa; border-radius: 1px 1px 5px 5px; background: #6f93c8; }
.tube { margin-left: 4px; }
.grip { margin-left: auto; }
.marks { position: absolute; top: -1px; left: -1px; width: 872px; height: 621px; pointer-events: none; }
</style>
